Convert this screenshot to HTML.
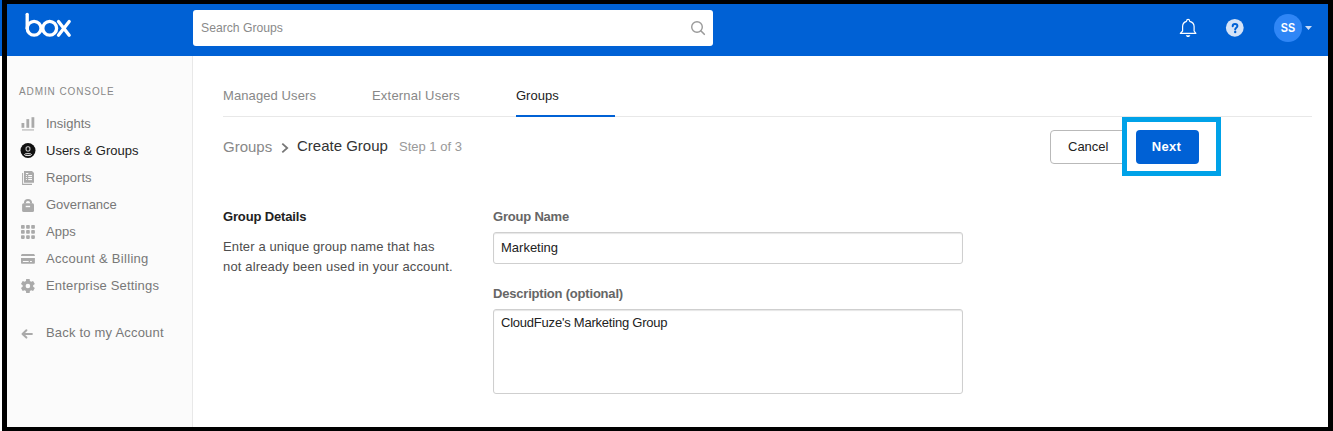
<!DOCTYPE html>
<html><head><meta charset="utf-8">
<style>
*{margin:0;padding:0;box-sizing:border-box}
html,body{width:1333px;height:431px;overflow:hidden;background:#fff}
body{position:relative;font-family:"Liberation Sans",sans-serif;font-size:13px;color:#222}
.a{position:absolute;white-space:nowrap;line-height:13px}
#hdr{position:absolute;left:0;top:0;width:1333px;height:56px;background:#0061d5}
#side{position:absolute;left:0;top:56px;width:193px;height:375px;background:#fbfbfb;border-right:1px solid #e8e8e8}
#search{position:absolute;left:193px;top:10px;width:520px;height:36px;background:#fff;border-radius:3px}
#frame{position:absolute;left:2px;top:0;width:1331px;height:431px;border-style:solid;border-color:#000;border-width:4px 5px 4px 5px}
.nav{color:#787878}
.ic{position:absolute}
</style></head>
<body>
<div id="hdr"></div>
<svg class="ic" style="left:0;top:0" width="80" height="56" viewBox="0 0 80 56">
  <g fill="none" stroke="#fff" stroke-width="3.3" stroke-linecap="round">
    <line x1="27.2" y1="14.3" x2="27.2" y2="28.3"/>
    <circle cx="34.1" cy="28.3" r="6.9"/>
    <circle cx="49.7" cy="28.3" r="6.9"/>
    <line x1="58.5" y1="21.5" x2="69.2" y2="35.2"/>
    <line x1="69.2" y1="21.5" x2="58.5" y2="35.2"/>
  </g>
</svg>
<div id="search"></div>
<div class="a" style="left:201px;top:22px;font-size:12.2px;color:#8a8a8a">Search Groups</div>
<svg class="ic" style="left:688px;top:18px" width="20" height="20" viewBox="0 0 20 20">
  <circle cx="9" cy="9" r="5.3" fill="none" stroke="#9a9a9a" stroke-width="1.4"/>
  <line x1="12.8" y1="12.8" x2="16.3" y2="16.3" stroke="#9a9a9a" stroke-width="1.6" stroke-linecap="round"/>
</svg>
<!-- bell -->
<svg class="ic" style="left:1176px;top:16px" width="24" height="24" viewBox="0 0 24 24">
  <path d="M4.3 17.3 H19.9 L18.1 15 V10.5 C18.1 7.8 16.6 6.1 13.7 5.3 C13.6 4.1 12.9 3.4 12.1 3.4 C11.3 3.4 10.6 4.1 10.5 5.3 C7.6 6.1 6.6 7.8 6.6 10.5 V15 Z" fill="none" stroke="#fff" stroke-width="1.2" stroke-linejoin="round"/>
  <path d="M9.8 19.2 H14.3 C14 20.4 13.2 21 12.05 21 C10.9 21 10.1 20.4 9.8 19.2 Z" fill="#fff"/>
</svg>
<!-- help -->
<svg class="ic" style="left:1222px;top:15px" width="26" height="26" viewBox="0 0 26 26">
  <circle cx="12.8" cy="12.8" r="8.9" fill="#d5e3f7"/>
  <path d="M10.7 11.3 C10.7 9.9 11.7 9.1 13 9.1 C14.4 9.1 15.4 9.9 15.4 11.1 C15.4 12.8 13.2 12.9 13.2 14.6" fill="none" stroke="#0061d5" stroke-width="2" stroke-linecap="round"/>
  <circle cx="13.2" cy="17" r="1.2" fill="#0061d5"/>
</svg>
<!-- avatar -->
<div class="ic" style="left:1274px;top:14px;width:28px;height:28px;border-radius:50%;background:#2f86f6"></div>
<div class="a" style="left:1274px;top:22px;width:28px;text-align:center;font-size:12.5px;font-weight:700;color:#fff;transform:scaleX(0.86)">SS</div>
<svg class="ic" style="left:1304px;top:25px" width="9" height="6" viewBox="0 0 9 6">
  <path d="M1 1 H8 L4.5 5 Z" fill="#c9dbf7"/>
</svg>

<!-- sidebar -->
<div id="side"></div>
<div class="a" style="left:19px;top:85px;font-size:10px;letter-spacing:0.9px;color:#888">ADMIN CONSOLE</div>

<div class="a nav" style="left:46px;top:117px">Insights</div>
<div class="a" style="left:46px;top:144px;color:#222">Users &amp; Groups</div>
<div class="a nav" style="left:46px;top:171px">Reports</div>
<div class="a nav" style="left:46px;top:198px">Governance</div>
<div class="a nav" style="left:46px;top:225px">Apps</div>
<div class="a nav" style="left:46px;top:252px;letter-spacing:0.3px">Account &amp; Billing</div>
<div class="a nav" style="left:46px;top:279px;letter-spacing:0.17px">Enterprise Settings</div>
<div class="a nav" style="left:46px;top:326px;letter-spacing:0.2px">Back to my Account</div>

<svg class="ic" style="left:18px;top:112px" width="20" height="240" viewBox="0 0 20 240">
  <!-- insights -->
  <g fill="#aaa">
    <rect x="3.5" y="11" width="2.8" height="4.8"/>
    <rect x="8.4" y="7.1" width="2.8" height="8.7"/>
    <rect x="13.5" y="5.2" width="2.8" height="10.6"/>
    <rect x="4" y="17.1" width="12" height="1.6" fill="#c8c8c8"/>
  </g>
  <!-- users & groups -->
  <circle cx="10" cy="38.5" r="7.5" fill="#111"/>
  <rect x="8.1" y="34.8" width="3.8" height="4.2" rx="1.1" fill="none" stroke="#fff" stroke-width="0.9"/>
  <ellipse cx="10" cy="42.6" rx="3.5" ry="1" fill="none" stroke="#fff" stroke-width="0.9"/>
  <!-- reports -->
  <g fill="#aaa">
    <path d="M6 59 H14 L16 61 V70.8 H6 Z"/>
    <path d="M4.1 61 H5.1 V71.8 H14 V72.9 H4.1 Z"/>
  </g>
  <g fill="#fbfbfb">
    <rect x="7.9" y="61" width="2.4" height="1.1"/>
    <rect x="7.9" y="63" width="1" height="1"/>
    <rect x="10.2" y="63" width="3.8" height="1.1"/>
    <rect x="7.9" y="65" width="1" height="1"/>
    <rect x="10.2" y="65" width="3.8" height="1.1"/>
    <rect x="7.9" y="67" width="1" height="1"/>
    <rect x="10.2" y="67" width="3.8" height="1.1"/>
  </g>
  <!-- governance lock -->
  <path d="M7 91.5 V90.5 C7 88.8 8.3 88 10 88 C11.7 88 13 88.8 13 90.5 V91.5" fill="none" stroke="#aaa" stroke-width="2"/>
  <rect x="4.1" y="91.3" width="11.9" height="8.6" rx="1.5" fill="#aaa"/>
  <rect x="7.7" y="93.8" width="4.4" height="1.4" fill="#fbfbfb"/>
  <!-- apps -->
  <g fill="#aaa">
    <rect x="3" y="113" width="3.7" height="3.7" rx="0.8"/>
    <rect x="8.1" y="113" width="3.7" height="3.7" rx="0.8"/>
    <rect x="13.2" y="113" width="3.7" height="3.7" rx="0.8"/>
    <rect x="3" y="118.1" width="3.7" height="3.7" rx="0.8"/>
    <rect x="8.1" y="118.1" width="3.7" height="3.7" rx="0.8"/>
    <rect x="13.2" y="118.1" width="3.7" height="3.7" rx="0.8"/>
    <rect x="3" y="123.2" width="3.7" height="3.7" rx="0.8"/>
    <rect x="8.1" y="123.2" width="3.7" height="3.7" rx="0.8"/>
    <rect x="13.2" y="123.2" width="3.7" height="3.7" rx="0.8"/>
  </g>
  <!-- card -->
  <path d="M3 143.9 C3 142.6 3.6 142 4.8 142 H15.1 C16.3 142 16.9 142.6 16.9 143.9 Z" fill="#aaa"/>
  <path d="M3 146 H16.9 V150.8 C16.9 151.4 16.4 151.8 15.8 151.8 H4.1 C3.5 151.8 3 151.4 3 150.8 Z" fill="#aaa"/>
  <rect x="4.9" y="149" width="5.8" height="1" fill="#fbfbfb"/>
  <rect x="12" y="149" width="1.9" height="1" fill="#fbfbfb"/>
  <!-- gear -->
  <g transform="translate(9.9 174)">
    <path fill="#aaa" fill-rule="evenodd" d="M-2.00 -4.91 L-1.75 -7.00 L1.75 -7.00 L2.00 -4.91 L3.25 -4.19 L5.19 -5.02 L6.94 -1.98 L5.25 -0.72 L5.25 0.72 L6.94 1.98 L5.19 5.02 L3.25 4.19 L2.00 4.91 L1.75 7.00 L-1.75 7.00 L-2.00 4.91 L-3.25 4.19 L-5.19 5.02 L-6.94 1.98 L-5.25 0.72 L-5.25 -0.72 L-6.94 -1.98 L-5.19 -5.02 L-3.25 -4.19 Z M0 -2.3 A2.3 2.3 0 1 0 0 2.3 A2.3 2.3 0 1 0 0 -2.3 Z"/>
  </g>
  <!-- back arrow -->
  <path d="M13.9 221.9 H4.6 M8.4 218.2 L4.5 221.9 L8.4 225.6" fill="none" stroke="#aaa" stroke-width="2" stroke-linecap="round" stroke-linejoin="round"/>
</svg>

<!-- tabs -->
<div class="a" style="left:223px;top:89px;color:#888;letter-spacing:0.1px">Managed Users</div>
<div class="a" style="left:372px;top:89px;color:#888;letter-spacing:0.2px">External Users</div>
<div class="a" style="left:516px;top:89px;color:#222">Groups</div>
<div class="ic" style="left:223px;top:116px;width:1089px;height:1px;background:#e8e8e8"></div>
<div class="ic" style="left:516px;top:115px;width:99px;height:2px;background:#0061d5"></div>

<!-- breadcrumb -->
<div class="a" style="left:223px;top:139px;font-size:15px;line-height:15px;color:#888">Groups</div>
<svg class="ic" style="left:278px;top:140px" width="14" height="16" viewBox="0 0 14 16">
  <path d="M4.3 3.6 L9.2 8 L4.3 12.4" fill="none" stroke="#777" stroke-width="1.8"/>
</svg>
<div class="a" style="left:297px;top:138px;font-size:15px;line-height:15px;color:#333">Create Group</div>
<div class="a" style="left:399px;top:140px;color:#999">Step 1 of 3</div>

<!-- buttons -->
<div class="ic" style="left:1050px;top:130px;width:77px;height:34px;border:1px solid #b9b9b9;border-radius:4px;background:#fff"></div>
<div class="a" style="left:1068px;top:140px;color:#222">Cancel</div>
<div class="ic" style="left:1136px;top:130px;width:63px;height:34px;border-radius:4px;background:#0061d5"></div>
<div class="a" style="left:1135px;top:140px;width:63px;text-align:center;font-weight:700;color:#fff;letter-spacing:0.3px">Next</div>
<div class="ic" style="left:1122px;top:117px;width:99px;height:59px;border:5px solid #00a2e8"></div>

<!-- form -->
<div class="a" style="left:223px;top:210px;font-weight:700;color:#222;letter-spacing:-0.15px">Group Details</div>
<div class="a" style="left:223px;top:240px;color:#4e4e4e;letter-spacing:0.12px">Enter a unique group name that has</div>
<div class="a" style="left:223px;top:260px;color:#4e4e4e;letter-spacing:0.15px">not already been used in your account.</div>
<div class="a" style="left:493px;top:210px;font-weight:700;color:#666;letter-spacing:-0.2px">Group Name</div>
<div class="ic" style="left:493px;top:232px;width:470px;height:32px;border:1px solid #cfcfcf;border-radius:3px;background:#fff;box-shadow:inset 0 1px 1px rgba(0,0,0,.1)"></div>
<div class="a" style="left:501px;top:241px;color:#222">Marketing</div>
<div class="a" style="left:493px;top:287px;font-weight:700;color:#666;letter-spacing:-0.2px">Description (optional)</div>
<div class="ic" style="left:493px;top:309px;width:470px;height:85px;border:1px solid #cfcfcf;border-radius:3px;background:#fff;box-shadow:inset 0 1px 1px rgba(0,0,0,.1)"></div>
<div class="a" style="left:501px;top:316px;color:#222;letter-spacing:-0.22px">CloudFuze's Marketing Group</div>

<div class="ic" style="left:0;top:56px;width:2px;height:375px;background:#fff"></div>
<div id="frame"></div>
</body></html>
